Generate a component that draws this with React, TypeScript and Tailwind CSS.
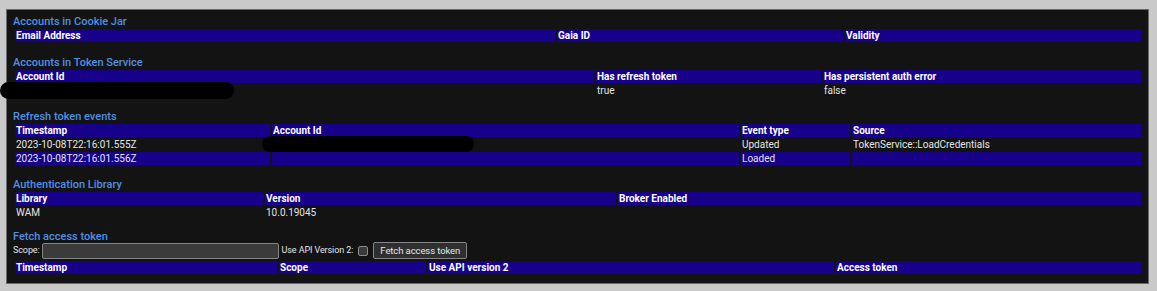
import React from 'react'

type Row = { cells: string[]; shaded?: boolean }

const font = { fontFamily: 'Roboto, "Open Sans", sans-serif' }

function Heading({ children }: { children: React.ReactNode }) {
  return <div className="h-[13px] leading-[14px] text-[11px] font-medium text-[#4f8fe6]">{children}</div>
}

function InfoTable({
  headers,
  widths,
  rows = [],
}: {
  headers: string[]
  widths: string[]
  rows?: Row[]
}) {
  return (
    <table className="w-full table-fixed border-separate border-spacing-x-[2px] border-spacing-y-[1px]">
      <thead>
        <tr>
          {headers.map((h, i) => (
            <th
              key={h}
              className={`${widths[i]} h-[13px] p-0 pl-px text-left align-middle leading-[13px] text-[10px] font-bold text-white bg-[#17008a] overflow-hidden whitespace-nowrap`}
            >
              {h}
            </th>
          ))}
        </tr>
      </thead>
      <tbody>
        {rows.map((r, ri) => (
          <tr key={ri}>
            {r.cells.map((c, ci) => (
              <td
                key={ci}
                className={`h-[13px] p-0 pl-px align-middle leading-[13px] text-[10px] text-[#e4e4e4] whitespace-nowrap overflow-hidden ${
                  r.shaded ? 'bg-[#17008a]' : ''
                }`}
              >
                {c}
              </td>
            ))}
          </tr>
        ))}
      </tbody>
    </table>
  )
}

export default function App() {
  return (
    <div className="relative w-[1157px] h-[291px] bg-[#c9c9c9] pt-[9px] pl-[6px] overflow-hidden" style={font}>
      <div className="w-[1143px] h-[275px] border border-[#6a6a6a] bg-[#131313] pt-[5px] pl-[6px] pr-[5px]">
        {/* Cookie jar */}
        <Heading>Accounts in Cookie Jar</Heading>
        <div className="mb-[13px]">
          <InfoTable headers={['Email Address', 'Gaia ID', 'Validity']} widths={['w-[540px]', 'w-[286px]', '']} />
        </div>

        {/* Token service */}
        <Heading>Accounts in Token Service</Heading>
        <div className="mb-[12px]">
          <InfoTable
            headers={['Account Id', 'Has refresh token', 'Has persistent auth error']}
            widths={['w-[579px]', 'w-[225px]', '']}
            rows={[{ cells: ['', 'true', 'false'] }]}
          />
        </div>

        {/* Refresh token events */}
        <Heading>Refresh token events</Heading>
        <div className="mb-[12px]">
          <InfoTable
            headers={['Timestamp', 'Account Id', 'Event type', 'Source']}
            widths={['w-[255px]', 'w-[467px]', 'w-[109px]', '']}
            rows={[
              { cells: ['2023-10-08T22:16:01.555Z', '', 'Updated', 'TokenService::LoadCredentials'] },
              { cells: ['2023-10-08T22:16:01.556Z', '', 'Loaded', ''], shaded: true },
            ]}
          />
        </div>

        {/* Auth library */}
        <Heading>Authentication Library</Heading>
        <div className="mb-[10px]">
          <InfoTable
            headers={['Library', 'Version', 'Broker Enabled']}
            widths={['w-[248px]', 'w-[351px]', '']}
            rows={[{ cells: ['WAM', '10.0.19045', ''] }]}
          />
        </div>

        {/* Fetch access token */}
        <Heading>Fetch access token</Heading>
        <div className="flex items-center h-[17px] -mt-px mb-px text-[9px] tracking-[-0.1px] text-[#e4e4e4]">
          <span>Scope:</span>
          <input
            type="text"
            className="ml-[2px] w-[237px] h-[16px] bg-[#3b3b3b] border border-[#858585] rounded-[2px] outline-none"
          />
          <span className="ml-[3px]">Use API Version 2:</span>
          <span className="ml-[5px] w-[10px] h-[10px] border border-[#8a8a8a] bg-[#3b3b3b] rounded-[2px]" />
          <button className="ml-[5px] h-[17px] w-[94px] bg-[#2f2f2f] border border-[#858585] rounded-[2px] text-[9.5px] leading-[15px] text-[#e6e6e6]">
            Fetch access token
          </button>
        </div>
        <InfoTable
          headers={['Timestamp', 'Scope', 'Use API version 2', 'Access token']}
          widths={['w-[262px]', 'w-[147px]', 'w-[406px]', '']}
        />
      </div>

      {/* redactions */}
      <div className="absolute left-0 top-[82px] w-[234px] h-[17px] rounded-full bg-black" />
      <div className="absolute left-[262px] top-[136px] w-[212px] h-[16px] rounded-full bg-black" />
    </div>
  )
}
